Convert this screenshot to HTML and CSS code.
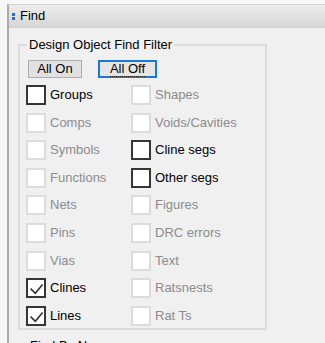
FILE: index.html
```html
<!DOCTYPE html>
<html lang="en">
<head>
    <meta charset="UTF-8">
    <title>Find</title>
    <link rel="stylesheet" href="styles.css">
</head>
<body>
    <div class="panel">
        <div class="titlebar">
            <span class="grip"><i></i><i></i></span>
            <span class="title">Find</span>
        </div>

        <fieldset class="filter">
            <legend>Design Object Find Filter</legend>
            <div class="buttons">
                <button class="btn">All On</button>
                <button class="btn focused"><span>All Off</span></button>
            </div>
            <div class="grid">
                <label class="item"><span class="box"></span>Groups</label>
                <label class="item off"><span class="box"></span>Shapes</label>
                <label class="item off"><span class="box"></span>Comps</label>
                <label class="item off"><span class="box"></span>Voids/Cavities</label>
                <label class="item off"><span class="box"></span>Symbols</label>
                <label class="item"><span class="box"></span>Cline segs</label>
                <label class="item off"><span class="box"></span>Functions</label>
                <label class="item"><span class="box"></span>Other segs</label>
                <label class="item off"><span class="box"></span>Nets</label>
                <label class="item off"><span class="box"></span>Figures</label>
                <label class="item off"><span class="box"></span>Pins</label>
                <label class="item off"><span class="box"></span>DRC errors</label>
                <label class="item off"><span class="box"></span>Vias</label>
                <label class="item off"><span class="box"></span>Text</label>
                <label class="item"><span class="box"><svg viewBox="0 0 16 16" width="16" height="16"><path d="M2.6 8.6 L7.3 13.3 L14.6 4.6" fill="none" stroke="#333" stroke-width="1.6"/></svg></span>Clines</label>
                <label class="item off"><span class="box"></span>Ratsnests</label>
                <label class="item"><span class="box"><svg viewBox="0 0 16 16" width="16" height="16"><path d="M2.6 8.6 L7.3 13.3 L14.6 4.6" fill="none" stroke="#333" stroke-width="1.6"/></svg></span>Lines</label>
                <label class="item off"><span class="box"></span>Rat Ts</label>
            </div>
        </fieldset>

        <div class="next">Find By Name</div>
    </div>
</body>
</html>
```

FILE: styles.css
```css
html, body {
    height: 100%;
}
body {
    margin: 0;
    padding: 4px 0 0 7px;
    box-sizing: border-box;
    background-color: #f7f7f7;
    font-family: "Liberation Sans", Arial, sans-serif;
    font-size: 13px;
    color: #000;
    overflow: hidden;
}
.panel {
    height: 100%;
    background-color: #f0f0f0;
    border-left: 2px solid #ababab;
    border-top: 1px solid #d2d2d2;
}
.titlebar {
    height: 22px;
    display: flex;
    align-items: center;
    background: linear-gradient(#ededed, #d6d6d6);
    border-bottom: 1px solid #d0d0d0;
}
.grip {
    display: flex;
    flex-direction: column;
    gap: 1px;
    margin: 0 5px 0 3px;
}
.grip i {
    display: block;
    width: 3px;
    height: 3px;
    background-color: #1c6fd6;
}
.title {
    line-height: 16px;
}
.filter {
    margin: 9px 0 0 9px;
    width: 232px;
    padding: 0 6px 2px 7px;
    border: 2px solid #dcdcdc;
}
.filter legend {
    padding: 0 2px;
    line-height: 16px;
}
.buttons {
    display: flex;
    gap: 16px;
    margin-top: 7px;
    padding-left: 1px;
}
.btn {
    height: 18px;
    width: 54px;
    padding: 0;
    font: inherit;
    line-height: 14px;
    color: #000;
    background-color: #e1e1e1;
    border: 1px solid #adadad;
}
.btn.focused {
    width: 59px;
    border: 2px solid #1979d8;
    background-color: #e5e5e5;
}
.btn.focused span {
    border-bottom: 1px dotted #222;
}
.grid {
    display: grid;
    grid-template-columns: 105px 1fr;
    grid-auto-rows: 20px;
    row-gap: 7.6px;
    margin-top: 7px;
}
.item {
    display: flex;
    align-items: center;
    gap: 4px;
    line-height: 18px;
    margin-left: -1px;
}
.box {
    width: 16px;
    height: 16px;
    flex: none;
    border: 2px solid #363636;
    background-color: #fff;
    display: flex;
}
.off {
    color: #8c8c8c;
}
.off .box {
    border-color: #dcdcdc;
}
.next {
    margin: 8px 0 0 21px;
    line-height: 16px;
}
```
